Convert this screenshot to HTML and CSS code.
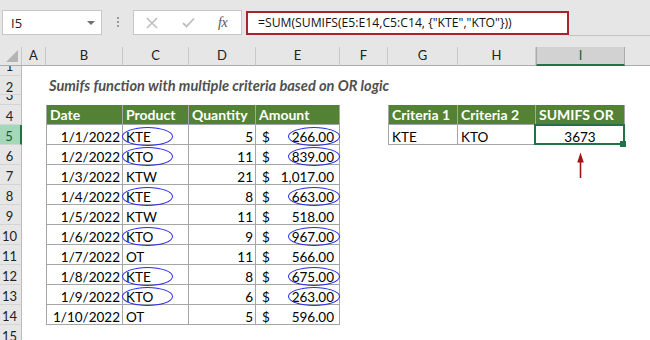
FILE: index.html
```html
<!DOCTYPE html>
<html>
<head>
<meta charset="utf-8">
<link rel="stylesheet" href="styles.css">
</head>
<body>
<div class="toolbar">
  <div class="namebox"><span>I5</span><span class="caret"></span></div>
  <div class="grip"><i></i><i></i><i></i></div>
  <div class="fxbox">
    <svg class="ico-x" width="12" height="12" viewBox="0 0 12 12"><path d="M1 1L11 11M11 1L1 11" stroke="#bdbdbd" stroke-width="1.6" fill="none"/></svg>
    <svg class="ico-ok" width="13" height="11" viewBox="0 0 13 11"><path d="M1 6L4.5 9.5L12 1.5" stroke="#bdbdbd" stroke-width="1.8" fill="none"/></svg>
    <span class="fx">fx</span>
  </div>
  <div class="formula">=SUM(SUMIFS(E5:E14,C5:C14, {"KTE","KTO"}))</div>
  <div class="rest"></div>
</div>
<div class="sheet">
  <div class="corner"><span class="tri"></span></div><div class="ch">A</div><div class="ch">B</div><div class="ch">C</div><div class="ch">D</div><div class="ch">E</div><div class="ch">F</div><div class="ch">G</div><div class="ch">H</div><div class="ch csel">I</div><div class="ch last"></div>

  <div class="rh short">1</div><div></div><div></div><div></div><div></div><div></div><div></div><div></div><div></div><div></div><div></div>

  <div class="rh">2</div><div></div><div class="title">Sumifs function with multiple criteria based on OR logic</div><div></div><div></div><div></div><div></div><div></div><div></div><div></div><div></div>

  <div class="rh short">3</div><div></div><div></div><div></div><div></div><div></div><div></div><div></div><div></div><div></div><div></div>

  <div class="rh">4</div><div></div><div class="b hd first">Date</div><div class="b hd">Product</div><div class="b hd">Quantity</div><div class="b hd">Amount</div><div></div><div class="b hd first">Criteria 1</div><div class="b hd">Criteria 2</div><div class="b hd">SUMIFS OR</div><div></div>

  <div class="rh rsel">5</div><div></div><div class="b first r">1/1/2022</div><div class="b ov">KTE</div><div class="b r">5</div><div class="b amt ove"><span>$</span><span>266.00</span></div><div></div><div class="b first">KTE</div><div class="b">KTO</div><div class="b ctr cur">3673</div><div></div>

  <div class="rh">6</div><div></div><div class="b first r">1/2/2022</div><div class="b ov">KTO</div><div class="b r">11</div><div class="b amt ove"><span>$</span><span>839.00</span></div><div></div><div></div><div></div><div class="anchor"><svg class="arrow" width="9" height="27" viewBox="0 0 9 27"><path d="M4.5 9V26" stroke="#a31515" stroke-width="1.6"/><path d="M1.2 10.5L4.5 0.5L7.8 10.5Z" fill="#a31515"/></svg></div><div></div>

  <div class="rh">7</div><div></div><div class="b first r">1/3/2022</div><div class="b">KTW</div><div class="b r">21</div><div class="b amt"><span>$</span><span>1,017.00</span></div><div></div><div></div><div></div><div></div><div></div>

  <div class="rh">8</div><div></div><div class="b first r">1/4/2022</div><div class="b ov">KTE</div><div class="b r">8</div><div class="b amt ove"><span>$</span><span>663.00</span></div><div></div><div></div><div></div><div></div><div></div>

  <div class="rh">9</div><div></div><div class="b first r">1/5/2022</div><div class="b">KTW</div><div class="b r">11</div><div class="b amt"><span>$</span><span>518.00</span></div><div></div><div></div><div></div><div></div><div></div>

  <div class="rh">10</div><div></div><div class="b first r">1/6/2022</div><div class="b ov">KTO</div><div class="b r">9</div><div class="b amt ove"><span>$</span><span>967.00</span></div><div></div><div></div><div></div><div></div><div></div>

  <div class="rh">11</div><div></div><div class="b first r">1/7/2022</div><div class="b">OT</div><div class="b r">11</div><div class="b amt"><span>$</span><span>566.00</span></div><div></div><div></div><div></div><div></div><div></div>

  <div class="rh">12</div><div></div><div class="b first r">1/8/2022</div><div class="b ov">KTE</div><div class="b r">8</div><div class="b amt ove"><span>$</span><span>675.00</span></div><div></div><div></div><div></div><div></div><div></div>

  <div class="rh">13</div><div></div><div class="b first r">1/9/2022</div><div class="b ov">KTO</div><div class="b r">6</div><div class="b amt ove"><span>$</span><span>263.00</span></div><div></div><div></div><div></div><div></div><div></div>

  <div class="rh">14</div><div></div><div class="b first r">1/10/2022</div><div class="b">OT</div><div class="b r">5</div><div class="b amt"><span>$</span><span>596.00</span></div><div></div><div></div><div></div><div></div><div></div>

  <div class="rh">15</div><div></div><div></div><div></div><div></div><div></div><div></div><div></div><div></div><div></div><div></div>
</div>
</body>
</html>
```
FILE: styles.css
```css
html, body {
  margin: 0;
  padding: 0;
}
body {
  width: 650px;
  height: 340px;
  overflow: hidden;
  background: #fff;
  font-family: Lato, "Liberation Sans", sans-serif;
}

/* ---------- formula toolbar ---------- */
.toolbar {
  height: 47px;
  box-sizing: border-box;
  padding-top: 10px;
  background: #e6e6e6;
  display: flex;
  align-items: flex-start;
}
.namebox {
  margin-left: 2px;
  width: 100px;
  height: 25px;
  box-sizing: border-box;
  border: 1px solid #c6c6c6;
  background: #fff;
  display: flex;
  align-items: center;
  justify-content: space-between;
  padding: 0 6px 0 8px;
  font: 13px "Open Sans", sans-serif;
  color: #222;
}
.caret {
  width: 0;
  height: 0;
  border-left: 4px solid transparent;
  border-right: 4px solid transparent;
  border-top: 4px solid #707070;
}
.grip {
  width: 31px;
  height: 25px;
  box-sizing: border-box;
  padding-top: 7px;
  display: flex;
  flex-direction: column;
  align-items: center;
  gap: 2px;
}
.grip i {
  display: block;
  width: 2px;
  height: 2px;
  background: #9a9a9a;
}
.fxbox {
  width: 109px;
  height: 25px;
  box-sizing: border-box;
  border: 1px solid #c6c6c6;
  background: #fff;
  display: flex;
  align-items: center;
}
.ico-x { margin-left: 12px; }
.ico-ok { margin-left: 24px; }
.fx {
  margin-left: 23px;
  font: italic 14px "Liberation Serif", serif;
  color: #555;
  letter-spacing: -0.5px;
}
.formula {
  margin-left: 4px;
  margin-top: 1px;
  width: 323px;
  height: 24px;
  box-sizing: border-box;
  border: 2px solid #a9242a;
  background: #fff;
  padding-left: 10px;
  font: 12.2px "Open Sans", sans-serif;
  line-height: 20px;
  color: #111;
  white-space: nowrap;
  overflow: hidden;
}
.rest {
  flex: 1;
  height: 26px;
  box-sizing: border-box;
  border-bottom: 1px solid #c4c4c4;
}

/* ---------- sheet grid ---------- */
.sheet {
  display: grid;
  grid-template-columns: 22px 24px 77px 66px 67px 84px 48px 70px 78px 89px 1fr;
  grid-template-rows: 19px 10px 19px 10px repeat(11, 20px) 20px;
  font-size: 13.5px;
  color: #000;
  background: #fff;
}
.sheet > div {
  box-sizing: border-box;
  min-width: 0;
}
.corner {
  background: #e6e6e6;
  border-right: 1px solid #c8c8c8;
  border-bottom: 1px solid #ababab;
  display: flex;
  justify-content: flex-end;
  align-items: flex-end;
  padding: 0 3px 3px 0;
}
.tri {
  width: 0;
  height: 0;
  border-left: 12px solid transparent;
  border-bottom: 12px solid #b4b4b4;
}
.ch {
  background: #e6e6e6;
  border-right: 1px solid #c8c8c8;
  border-bottom: 1px solid #ababab;
  text-align: center;
  font-size: 13px;
  line-height: 15px;
  padding-top: 1px;
  color: #222;
}
.ch.last { border-right: 0; }
.ch.csel {
  background: #d2d2d2;
  border-left: 1px solid #ababab;
  border-right: 1px solid #ababab;
  border-bottom: 2px solid #217346;
  color: #1d5a37;
}
.rh {
  background: #e6e6e6;
  border-right: 1px solid #bcbcbc;
  border-bottom: 1px solid #d4d4d4;
  text-align: center;
  padding-right: 2px;
  font-size: 13px;
  line-height: 20px;
  padding-top: 1px;
  color: #222;
  overflow: hidden;
}
.rh.short {
  line-height: 0;
  padding-top: 0;
}
.rh.rsel {
  background: #a5d7bb;
  border-right: 2px solid #217346;
  color: #1d5a37;
}
.title {
  white-space: nowrap;
  padding-left: 3px;
  font-size: 14.6px;
  line-height: 19px;
  font-weight: bold;
  font-style: italic;
  color: #505050;
}
.b {
  border-right: 1px solid #a6a6a6;
  border-bottom: 1px solid #a6a6a6;
  line-height: 16px;
  padding: 4px 3px 0;
  white-space: nowrap;
  position: relative;
}
.b.first { border-left: 1px solid #a6a6a6; }
.b.hd {
  background: #548235;
  color: #fff;
  font-weight: bold;
  font-size: 14px;
  padding-top: 2px;
}
.b.r { text-align: right; padding-right: 2px; }
.b.ctr { text-align: center; }
.b.amt {
  display: flex;
  justify-content: space-between;
  padding: 4px 5px 0 6px;
}

/* annotation ovals drawn over cells */
.ov::after,
.ove::after {
  content: "";
  position: absolute;
  top: 2px;
  height: 19px;
  box-sizing: border-box;
  border: 1.5px solid #2b2bef;
  border-radius: 50%;
}
.ov::after { left: -1px; width: 51px; }
.ove::after { left: 32px; width: 52px; }

/* active cell */
.cur::before {
  content: "";
  position: absolute;
  left: -2px;
  top: -1px;
  right: -1px;
  bottom: -1px;
  border: 2px solid #217346;
}
.cur::after {
  content: "";
  position: absolute;
  right: -2px;
  bottom: -3px;
  width: 6px;
  height: 6px;
  background: #217346;
}
.anchor { position: relative; }
.arrow {
  position: absolute;
  left: 40px;
  top: 7px;
}
```
